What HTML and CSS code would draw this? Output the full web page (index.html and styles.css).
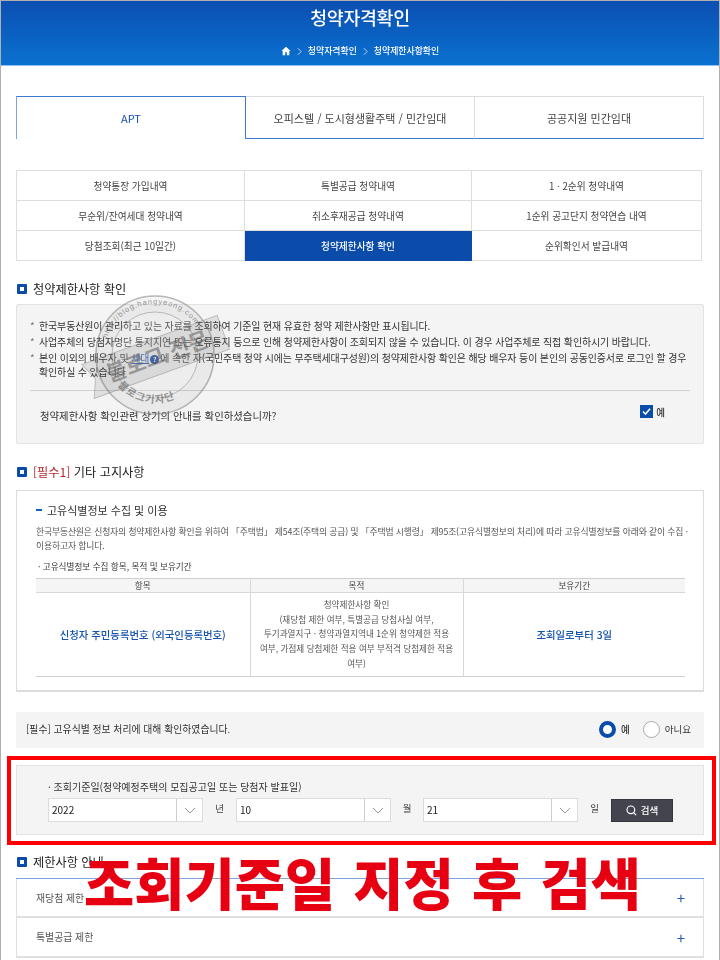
FILE: index.html
```html
<!DOCTYPE html>
<html lang="ko">
<head>
<meta charset="utf-8">
<title>청약자격확인</title>
<link rel="stylesheet" href="styles.css">
</head>
<body>
<div class="page">
  <header class="hero">
    <h1 class="hero-title">청약자격확인</h1>
    <nav class="crumbs">
      <svg class="home" viewBox="0 0 12 12" width="10" height="10"><path d="M6 1 L0.5 6 H2 V11 H5 V7.5 H7 V11 H10 V6 H11.5 Z" fill="#fff"/></svg>
      <svg class="chev" viewBox="0 0 6 10" width="5" height="9"><path d="M1 1 L5 5 L1 9" fill="none" stroke="#dbe8f8" stroke-width="1"/></svg>
      <span>청약자격확인</span>
      <svg class="chev" viewBox="0 0 6 10" width="5" height="9"><path d="M1 1 L5 5 L1 9" fill="none" stroke="#dbe8f8" stroke-width="1"/></svg>
      <span>청약제한사항확인</span>
    </nav>
  </header>

  <main class="content">
    <div class="tabs">
      <div class="tab tab-on">APT</div>
      <div class="tab">오피스텔 / 도시형생활주택 / 민간임대</div>
      <div class="tab">공공지원 민간임대</div>
    </div>

    <div class="menu">
      <div class="cell">청약통장 가입내역</div>
      <div class="cell">특별공급 청약내역</div>
      <div class="cell">1 · 2순위 청약내역</div>
      <div class="cell">무순위/잔여세대 청약내역</div>
      <div class="cell">취소후재공급 청약내역</div>
      <div class="cell">1순위 공고단지 청약연습 내역</div>
      <div class="cell">당첨조회(최근 10일간)</div>
      <div class="cell cell-on">청약제한사항 확인</div>
      <div class="cell">순위확인서 발급내역</div>
    </div>

    <h2 class="sec sec-first"><i class="sq"></i>청약제한사항 확인</h2>
    <section class="notice">
      <ul class="notes">
        <li>한국부동산원이 관리하고 있는 자료를 조회하여 기준일 현재 유효한 청약 제한사항만 표시됩니다.</li>
        <li>사업주체의 당첨자명단 통지지연 또는 오류통지 등으로 인해 청약제한사항이 조회되지 않을 수 있습니다. 이 경우 사업주체로 직접 확인하시기 바랍니다.</li>
        <li class="note-tight">본인 이외의 배우자 및 <a class="lnk">세대</a><b class="qm">?</b>에 속한 자(국민주택 청약 시에는 무주택세대구성원)의 청약제한사항 확인은 해당 배우자 등이 본인의 공동인증서로 로그인 할 경우<br>확인하실 수 있습니다</li>
      </ul>
      <div class="confirm">
        <span>청약제한사항 확인관련 상기의 안내를 확인하셨습니까?</span>
        <span class="chk-wrap">
          <svg class="chk" viewBox="0 0 13 13" width="13" height="13"><rect width="13" height="13" fill="#0b4ea8"/><path d="M3 6.5 L5.5 9 L10 3.8" fill="none" stroke="#fff" stroke-width="1.6"/></svg>
          <span>예</span>
        </span>
      </div>
    </section>

    <h2 class="sec sec-second"><i class="sq"></i><em>[필수1]</em>&nbsp;기타 고지사항</h2>
    <section class="terms">
      <h3 class="sub"><i class="dash"></i>고유식별정보 수집 및 이용</h3>
      <p class="para">한국부동산원은 신청자의 청약제한사항 확인을 위하여 「주택법」 제54조(주택의 공급) 및 「주택법 시행령」 제95조(고유식별정보의 처리)에 따라 고유식별정보를 아래와 같이 수집 ·<br>이용하고자 합니다.</p>
      <p class="bullet">· 고유식별정보 수집 항목, 목적 및 보유기간</p>
      <table class="tbl">
        <thead>
          <tr><th class="c1">항목</th><th class="c2">목적</th><th class="c3">보유기간</th></tr>
        </thead>
        <tbody>
          <tr>
            <td class="hl">신청자 주민등록번호 (외국인등록번호)</td>
            <td class="pur">청약제한사항 확인<br>(재당첨 제한 여부, 특별공급 당첨사실 여부,<br>투기과열지구 · 청약과열지역내 1순위 청약제한 적용<br>여부, 가점제 당첨제한 적용 여부 부적격 당첨제한 적용<br>여부)</td>
            <td class="hl">조회일로부터 3일</td>
          </tr>
        </tbody>
      </table>
    </section>

    <div class="agree">
      <span>[필수] 고유식별 정보 처리에 대해 확인하였습니다.</span>
      <span class="radios">
        <i class="radio radio-on"></i><span class="r-lab">예</span>
        <i class="radio"></i><span>아니요</span>
      </span>
    </div>

    <section class="search">
      <p class="search-lab">· 조회기준일(청약예정주택의 모집공고일 또는 당첨자 발표일)</p>
      <div class="search-row">
        <div class="sel"><span class="sel-val">2022</span><span class="sel-arr"><svg viewBox="0 0 12 7" width="12" height="7"><path d="M1 1 L6 6 L11 1" fill="none" stroke="#9a9a9a"/></svg></span></div>
        <span class="unit">년</span>
        <div class="sel"><span class="sel-val">10</span><span class="sel-arr"><svg viewBox="0 0 12 7" width="12" height="7"><path d="M1 1 L6 6 L11 1" fill="none" stroke="#9a9a9a"/></svg></span></div>
        <span class="unit unit-m">월</span>
        <div class="sel"><span class="sel-val">21</span><span class="sel-arr"><svg viewBox="0 0 12 7" width="12" height="7"><path d="M1 1 L6 6 L11 1" fill="none" stroke="#9a9a9a"/></svg></span></div>
        <span class="unit">일</span>
        <button class="btn"><svg viewBox="0 0 12 12" width="11" height="11"><circle cx="5.3" cy="5.3" r="4.2" fill="none" stroke="#fff" stroke-width="1.3"/><path d="M8.2 8.2 L11 11" stroke="#fff" stroke-width="1.3"/></svg>검색</button>
      </div>
    </section>

    <h2 class="sec sec-third"><i class="sq"></i>제한사항 안내</h2>
    <section class="acc">
      <div class="acc-row"><span>재당첨 제한</span><b class="plus">+</b></div>
      <div class="acc-row"><span>특별공급 제한</span><b class="plus">+</b></div>
    </section>
  </main>

  <svg class="stamp" viewBox="0 0 160 160" width="160" height="160">
    <defs>
      <path id="arc-top" d="M29 80 A51 51 0 0 1 131 80"/>
      <path id="arc-low" d="M32 80 A48 48 0 0 0 128 80"/>
    </defs>
    <circle cx="80" cy="80" r="59" fill="#666" fill-opacity=".07" stroke="#777" stroke-opacity=".5" stroke-width="1.6"/>
    <circle cx="80" cy="80" r="43" fill="#fff" fill-opacity=".18" stroke="#777" stroke-opacity=".45"/>
    <g transform="rotate(10 80 80)">
      <text class="stamp-url"><textPath href="#arc-top" startOffset="5%">http://blog.hangyeong.com</textPath></text>
    </g>
    <g transform="rotate(-14 80 80)">
      <text class="stamp-low"><textPath href="#arc-low" startOffset="14%">블로그기자단</textPath></text>
    </g>
    <g transform="rotate(-20 80 80)">
      <path d="M8 64 H152 V100 H8 L16 82 Z" fill="#666" fill-opacity=".14" stroke="#777" stroke-opacity=".4"/>
      <text class="stamp-main" x="82" y="90" text-anchor="middle">블로그 전문</text>
    </g>
  </svg>

  <div class="redbox"></div>
  <div class="redtext">조회기준일 지정 후 검색</div>
</div>
</body>
</html>
```
FILE: styles.css
```css
* { box-sizing: border-box; }
html, body { margin: 0; padding: 0; background: #fff; }
body { font-family: "Noto Sans CJK KR", "Noto Sans", sans-serif; color: #333; }
.page { position: relative; width: 720px; height: 960px; overflow: hidden; border: 1px solid #b0b0b0; border-bottom: 0; }
.hero { height: 65px; background: linear-gradient(180deg, #0b4fb2 0%, #0a71d0 100%); border-bottom: 1px solid #8fc0ec; text-align: center; color: #fff; padding-top: 4px; filter: blur(.3px); }
.hero-title { margin: 0; font-size: 18.4px; line-height: 25px; font-weight: 500; letter-spacing: -.3px; }
.crumbs { display: flex; justify-content: center; align-items: center; gap: 6px; margin-top: 14px; font-size: 8.9px; line-height: 14px; font-weight: 500; }
.content { padding: 0 15px; filter: blur(.3px); }
.tabs { display: grid; grid-template-columns: 230px 229px 229px; margin-top: 30px; height: 43px; }
.tab { display: flex; align-items: center; justify-content: center; font-size: 11px; color: #444; border: 1px solid #dcdcdc; border-left: 0; border-bottom: 1px solid #3f78cf; }
.tab-on { color: #1b50b0; border: 1px solid #3f78cf; border-left-color: #7aa5e0; border-bottom: 0; }
.menu { display: grid; grid-template-columns: 228px 227px 230px; grid-auto-rows: 30px; margin-top: 31px; border-top: 1px solid #dedede; border-left: 1px solid #dedede; width: 686px; }
.cell { display: flex; align-items: center; justify-content: center; font-size: 9.7px; color: #444; border-right: 1px solid #dedede; border-bottom: 1px solid #dedede; }
.cell-on { background: #0b4cab; color: #fff; font-weight: 500; border-color: #0b4cab; }
.sec { display: flex; align-items: center; margin: 0; font-size: 12.2px; line-height: 18px; font-weight: 400; color: #222; }
.sec em { font-style: normal; color: #b3282d; }
.sq { width: 10px; height: 10px; margin-right: 6px; margin-left: 1px; border: 3px solid #0b4cab; border-radius: 1px; background: #fff; flex: none; }
.sec-first { margin-top: 19px; }
.sec-second { margin-top: 19px; }
.sec-third { margin-top: 18px; }
.notice { margin-top: 6px; height: 140px; background: #f4f4f4; border: 1px solid #e3e3e3; border-radius: 2px; padding: 14px 13px 0; }
.notes { list-style: none; margin: 0; padding: 0; font-size: 9.95px; line-height: 14px; color: #333; }
.notes li { position: relative; padding-left: 9px; margin-bottom: 2px; letter-spacing: -.1px; white-space: nowrap; }
.notes li::before { content: "*"; position: absolute; left: 0; top: 0; color: #777; }
.notes .note-tight { line-height: 13.5px; }
.lnk { color: #1b4fb0; text-decoration: underline; }
.qm { display: inline-flex; width: 9px; height: 9px; align-items: center; justify-content: center; border-radius: 50%; background: #0b3f9e; color: #fff; font-size: 7px; line-height: 9px; margin: 0 1px; }
.confirm { display: flex; justify-content: space-between; align-items: center; margin-top: 12px; border-top: 1px solid #cfcfcf; padding: 17px 25px 0 10px; font-size: 10.4px; color: #333; }
.chk-wrap { display: flex; align-items: center; gap: 3px; font-weight: 500; font-size: 9.5px; margin-top: -8px; }
.chk { display: block; }
.terms { margin-top: 9px; height: 202px; border: 1px solid #dcdcdc; border-bottom-width: 2px; padding: 9px 19px 0; }
.sub { display: flex; align-items: center; margin: 0; font-size: 11px; line-height: 20px; font-weight: 400; color: #333; }
.dash { width: 6px; height: 2px; background: #1b5fc4; margin-right: 5px; }
.para { margin: 5px 0 0; font-size: 8.8px; line-height: 14px; color: #555; letter-spacing: -.12px; white-space: nowrap; }
.bullet { margin: 6px 0 0 2px; font-size: 8.6px; line-height: 14px; color: #333; }
.tbl { width: 649px; margin-top: 5px; border-collapse: collapse; table-layout: fixed; border-top: 1px solid #cfcfcf; border-bottom: 1px solid #cfcfcf; }
.tbl th { height: 14px; padding: 0; font-size: 8.6px; line-height: 13px; font-weight: 400; color: #444; background: #f5f5f5; border-bottom: 1px solid #d8d8d8; border-left: 1px solid #d8d8d8; }
.tbl th:first-child, .tbl td:first-child { border-left: 0; }
.c1 { width: 214px; }
.c2 { width: 213px; }
.tbl td { padding: 0; text-align: center; border-left: 1px solid #d8d8d8; }
.hl { color: #1453ad; font-size: 10.4px; font-weight: 500; }
.tbl .pur { padding: 4px 0 5px; font-size: 8.6px; line-height: 14.7px; color: #555; }
.agree { display: flex; justify-content: space-between; align-items: center; margin-top: 20px; height: 36px; background: #f4f4f4; padding: 0 13px 2px 10px; font-size: 9.85px; color: #333; }
.radios { display: flex; align-items: center; font-size: 9.5px; }
.radio { width: 17px; height: 17px; border-radius: 50%; border: 1px solid #aaa; background: #fff; margin-right: 5px; }
.radio-on { border: 4.5px solid #0b4cab; }
.r-lab { margin-right: 13px; font-weight: 500; }
.search { margin-top: 17px; height: 70px; background: #f4f4f4; border: 1px solid #e3e3e3; padding: 14px 30px 0 31px; }
.search-lab { margin: 0; font-size: 10px; line-height: 14px; color: #333; }
.search-row { display: flex; align-items: center; margin-top: 4px; }
.sel { display: flex; width: 155px; height: 24px; background: #fff; border: 1px solid #dcdcdc; }
.sel-val { flex: 1; padding-left: 3px; font-size: 10px; line-height: 22px; color: #222; }
.sel-arr { width: 26px; border-left: 1px solid #cfcfcf; display: flex; align-items: center; justify-content: center; }
.unit { width: 33px; text-align: center; font-size: 9.5px; color: #444; padding-bottom: 4px; }
.unit-m { width: 32px; }
.btn { display: flex; align-items: center; justify-content: center; gap: 4px; width: 62px; height: 23px; margin: 0; padding: 0; background: #44444f; border: 1px solid #36363f; color: #fff; font: 500 9.5px "Noto Sans CJK KR", sans-serif; }
.acc { margin-top: 7px; border-top: 1px solid #7ea5de; }
.acc-row { display: flex; justify-content: space-between; align-items: center; height: 39px; padding: 0 18px 0 19px; border: 1px solid #e0e0e0; border-top: 0; border-bottom-width: 2px; font-size: 9.9px; color: #555; }
.acc-row + .acc-row { height: 40px; }
.plus { color: #2a5fb8; font-size: 15px; font-weight: 400; }
.stamp { position: absolute; left: 74px; top: 274px; pointer-events: none; }
.stamp-url { font: 7.5px "Liberation Sans", sans-serif; fill: #666; fill-opacity: .7; letter-spacing: .9px; }
.stamp-main { font: 700 22px "Noto Sans CJK KR", sans-serif; fill: #555; fill-opacity: .5; }
.stamp-low { font: 700 10.5px "Noto Sans CJK KR", sans-serif; fill: #555; fill-opacity: .6; letter-spacing: 1px; }
.redbox { position: absolute; left: 6px; top: 755px; width: 709px; height: 89px; border: 4px solid #ff0000; pointer-events: none; }
.redtext { position: absolute; left: 83px; top: 845px; white-space: nowrap; font-size: 56px; line-height: 70px; font-weight: 900; color: #e60012; transform: scaleX(.975); transform-origin: left center; word-spacing: 3px; }
```
